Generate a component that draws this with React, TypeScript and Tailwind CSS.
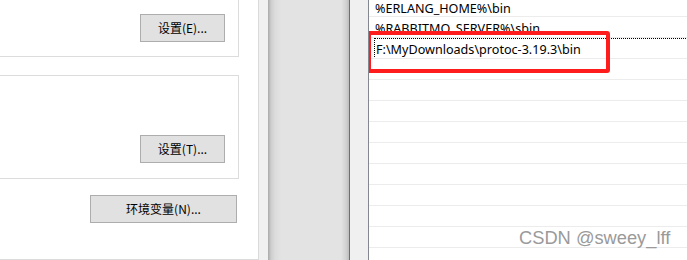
import React from "react";

const rows = [
  "%ERLANG_HOME%\\bin",
  "%RABBITMQ_SERVER%\\sbin",
  "F:\\MyDownloads\\protoc-3.19.3\\bin",
  "",
  "",
  "",
  "",
  "",
  "",
  "",
  "",
  "",
  "",
];

function Btn({ children, className }: { children: React.ReactNode; className: string }) {
  return (
    <div
      className={
        "flex items-center justify-center border border-[#adadad] bg-[#e1e1e1] text-[12px] text-black " +
        className
      }
      style={{ fontFamily: '"Noto Sans CJK SC", "Noto Sans", sans-serif' }}
    >
      {children}
    </div>
  );
}

export default function App() {
  return (
    <div className="flex h-[260px] w-[687px] overflow-hidden bg-[#f0f0f0]">
      {/* left dialog */}
      <div className="flex h-[260px] w-[259px] shrink-0 flex-col border-r border-b border-[#dadada] bg-white">
        <div className="flex h-[57px] w-[239px] justify-end border-r border-b border-[#dcdcdc] pt-[14px] pr-[13px]">
          <Btn className="h-[28px] w-[85px]">设置(E)...</Btn>
        </div>
        <div className="mt-[18px] flex h-[104px] w-[239px] items-end justify-end border-t border-r border-b border-[#dcdcdc] pr-[13px] pb-[15px]">
          <Btn className="h-[28px] w-[85px]">设置(T)...</Btn>
        </div>
        <div className="mt-[16px] flex w-[237px] justify-end">
          <Btn className="h-[28px] w-[147px]">环境变量(N)...</Btn>
        </div>
      </div>
      {/* gap */}
      <div className="w-[9px] shrink-0 bg-[#f0f0f0]" />
      {/* shaded panel */}
      <div className="h-full w-[82px] shrink-0 border-r border-[#6f6f6f] bg-[linear-gradient(to_right,#a9a9a9_0px,#cdcdcd_3px,#dcdcdc_7px,#e3e3e3_13px,#e3e3e3_73px,#d2d2d2_78px,#bdbdbd_81px)]" />
      <div className="w-[19px] shrink-0 border-r border-[#828790] bg-[#f0f0f0]" />
      {/* list */}
      <div className="relative h-full w-[318px] shrink-0 overflow-hidden bg-white">
        <div className="flex flex-col">
          {rows.map((r, i) => (
            <div
              key={i}
              className={
                "flex items-center overflow-hidden border-b border-[#ececec] text-[12.6px] leading-[15px] text-black " +
                (i === 0 ? "h-[17px]" : "h-[21px] pt-[2px]")
              }
              style={{ fontFamily: '"Noto Sans", "Noto Sans CJK SC", sans-serif' }}
            >
              {i === 2 ? (
                <div className="-mt-[2px] ml-[5px] flex h-[21px] w-[330px] shrink-0 items-center border border-dotted border-black pt-[2px] pl-[1px]">
                  {r}
                </div>
              ) : (
                <span className="pl-[6px] whitespace-nowrap">{r}</span>
              )}
            </div>
          ))}
        </div>
        <div className="absolute top-[31px] left-[-2px] h-[42px] w-[243px] rounded-[3px] border-[4px] border-[#ff1c1c]" />
        <div
          className="absolute top-[229px] left-[150px] text-[18.3px] leading-none text-[#9a9a9a]"
          style={{ fontFamily: '"Liberation Sans", Arial, sans-serif' }}
        >
          CSDN @sweey_lff
        </div>
      </div>
    </div>
  );
}
